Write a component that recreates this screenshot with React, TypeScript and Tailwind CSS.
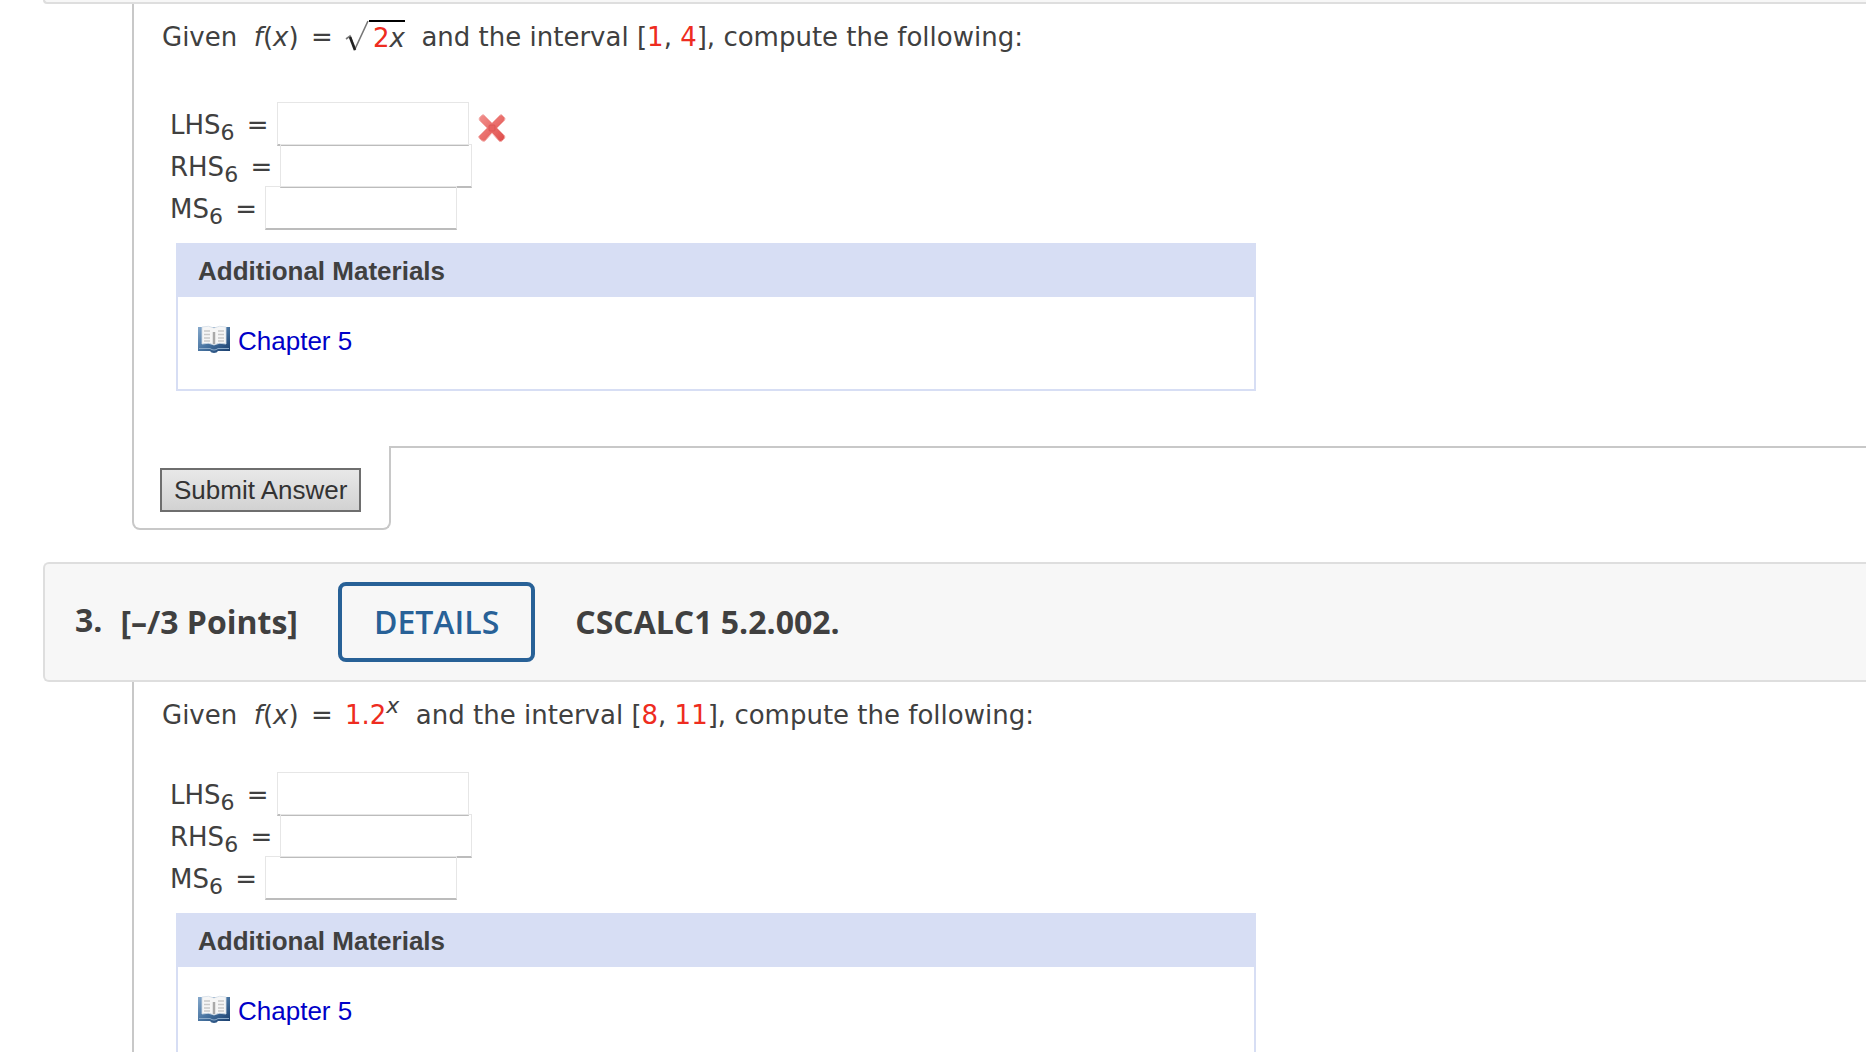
import React from "react";

interface AnswerField {
  label: string;
  wrong?: boolean;
}

interface QuestionBodyProps {
  id: string;
  answers: AnswerField[];
  children: React.ReactNode;
}

const WrongIcon: React.FC = () => (
  <svg viewBox="0 0 30 32" role="img" aria-label="Incorrect" className="h-8 w-[30px] shrink-0">
    <defs>
      <linearGradient id="wrong" x1="0" y1="0" x2="1" y2="1">
        <stop offset="0" stopColor="#f1918e" />
        <stop offset="0.5" stopColor="#ea6f6c" />
        <stop offset="1" stopColor="#dd4a47" />
      </linearGradient>
    </defs>
    <path
      d="M7 3 L15 11 L23 3 Q25 2 26 4 L28 6 Q28 8 27 9 L20 16 L27 23 Q29 25 27 27 L25 29 Q23 30 22 29 L15 21 L8 29 Q6 30 4 28 L2 26 Q1 24 3 23 L10 16 L3 9 Q1 7 3 5 L4 4 Q6 2 7 3 Z"
      fill="url(#wrong)"
      stroke="#f3b2b0"
      strokeWidth="1"
    />
    <rect x="12" y="13" width="6" height="6" rx="1" fill="#e66360" stroke="#dc5754" strokeWidth="1" />
  </svg>
);

const BookIcon: React.FC = () => (
  <svg viewBox="0 0 32 28" aria-hidden="true" className="h-7 w-8 shrink-0">
    <defs>
      <linearGradient id="cover" x1="0" y1="0" x2="1" y2="1">
        <stop offset="0" stopColor="#86a9cc" />
        <stop offset="0.5" stopColor="#46729f" />
        <stop offset="1" stopColor="#163b6b" />
      </linearGradient>
    </defs>
    <path d="M0 2 H32 V26 H20 Q19 28 16 28 Q13 28 12 26 H0 Z" fill="url(#cover)" />
    <path d="M1 23.500 H12 Q14 25 16 25 Q18 25 20 23.500 H31" fill="none" stroke="#8aa9c8" />
    <path d="M4 2 Q11 0 16 3 Q21 0 28 2 V19 Q21 17 16 20 Q11 17 4 19 Z" fill="#f6f6f6" stroke="#d3dde7" strokeWidth="0.8" />
    <path d="M16 7 V19" stroke="#a9a9a9" strokeWidth="2.5" />
    <path
      d="M6 6 H12 M6 9.500 H12 M6 13 H12 M6 16 H12 M20 6 H26 M20 9.500 H26 M20 13 H26 M20 16 H26"
      stroke="#c9c9c9"
      strokeWidth="1.3"
    />
  </svg>
);

const SquareRoot: React.FC<{ children: React.ReactNode }> = ({ children }) => (
  <span className="mb-1 inline-flex items-start align-middle">
    <svg viewBox="0 0 24 34" aria-hidden="true" className="h-[34px] w-6">
      <path d="M1 19 L5 16 L10 29 L23 1" fill="none" stroke="#777" strokeWidth="1.6" />
      <path d="M5 17 L10 30" fill="none" stroke="#222" strokeWidth="2.6" />
    </svg>
    <span className="border-t-2 border-black pl-1 leading-8">{children}</span>
  </span>
);

const Red: React.FC<{ children: React.ReactNode }> = ({ children }) => (
  <span className="text-[#ee2c20]">{children}</span>
);

const Equals: React.FC = () => <span className="mx-1">=</span>;

const Materials: React.FC = () => (
  <div className="mt-[14px] ml-[42px] max-w-[1080px] border-2 border-[#d7def4] font-['Liberation_Sans',sans-serif]">
    <h3 className="bg-[#d7def4] px-5 py-2 text-[26px] leading-9 font-bold">Additional Materials</h3>
    <div className="flex items-start gap-2 px-5 pt-7 pb-8">
      <BookIcon />
      <a href="#chapter-5" className="text-[26px] leading-8 text-[#0000c8]">
        Chapter 5
      </a>
    </div>
  </div>
);

const QuestionBody: React.FC<QuestionBodyProps> = ({ id, answers, children }) => (
  <div className="ml-[132px] border-l-2 border-[#c8c8c8] font-['DejaVu_Sans',sans-serif] text-[26px]">
    {children}
    <div className="ml-9">
      {answers.map((answer) => (
        <div key={answer.label} className="flex h-[42px] items-center">
          <label htmlFor={`${id}-${answer.label}`} className="mr-1 pt-0.5 leading-10">
            {answer.label}
            <sub className="text-[22px]">6</sub> <Equals />
          </label>
          <input
            id={`${id}-${answer.label}`}
            type="text"
            className="h-11 w-48 shrink-0 border border-b-2 border-[#e6e6e6] border-b-[#bcbcbc] bg-transparent px-2 text-2xl"
          />
          {answer.wrong && (
            <span className="ml-2 pt-2">
              <WrongIcon />
            </span>
          )}
        </div>
      ))}
    </div>
    <Materials />
  </div>
);

const SubmitTab: React.FC = () => (
  <div className="ml-[132px] flex">
    <div className="rounded-b-lg border-2 border-t-0 border-[#c8c8c8] pt-[22px] pr-7 pb-4 pl-[26px]">
      <button
        type="submit"
        className="block h-11 border-2 border-[#6e6e6e] bg-linear-to-b from-[#e8e8e8] to-[#d2d2d2] px-3 font-['Liberation_Sans',sans-serif] text-[26px] leading-9 text-[#333]"
      >
        Submit Answer
      </button>
    </div>
    <div className="flex-1 border-t-2 border-[#c8c8c8]" />
  </div>
);

const QuestionHeader: React.FC = () => (
  <header className="ml-[43px] flex h-[120px] items-center rounded-l-md border-2 border-r-0 border-[#dedede] bg-[#f7f7f7] pl-[30px] font-['Open_Sans',sans-serif] text-[32px] font-bold">
    <span className="mr-[18px] pb-1">3.</span>
    <span className="mr-10">[–/3 Points]</span>
    <button
      type="button"
      className="mr-10 h-20 rounded-lg border-4 border-[#286197] px-8 font-semibold text-[#286197]"
    >
      DETAILS
    </button>
    <h2>CSCALC1 5.2.002.</h2>
  </header>
);

const App: React.FC = () => {
  return (
    <main className="h-screen overflow-hidden bg-white text-[#404040]">
      <div className="ml-[43px] h-1 rounded-bl-md border-b-2 border-l-2 border-[#dedede] bg-[#f7f7f7]" />
      <QuestionBody id="q2" answers={[{ label: "LHS", wrong: true }, { label: "RHS" }, { label: "MS" }]}>
        <p className="ml-7 h-[99px] pt-[13px] leading-10">
          Given&nbsp; <i>f</i>(<i>x</i>) <Equals />{" "}
          <SquareRoot>
            <Red>2</Red>
            <i>x</i>
          </SquareRoot>
          &nbsp; and the interval [<Red>1</Red>, <Red>4</Red>], compute the following:
        </p>
      </QuestionBody>
      <div className="ml-[132px] h-[55px] border-l-2 border-[#c8c8c8]" />
      <SubmitTab />
      <div className="h-8" />
      <QuestionHeader />
      <QuestionBody id="q3" answers={[{ label: "LHS" }, { label: "RHS" }, { label: "MS" }]}>
        <p className="ml-7 h-[91px] pt-[13px] leading-10">
          Given&nbsp; <i>f</i>(<i>x</i>) <Equals /> <Red>1.2</Red>
          <sup className="text-[22px]">
            <i>x</i>
          </sup>
          &nbsp; and the interval [<Red>8</Red>, <Red>11</Red>], compute the following:
        </p>
      </QuestionBody>
    </main>
  );
};

export default App;
